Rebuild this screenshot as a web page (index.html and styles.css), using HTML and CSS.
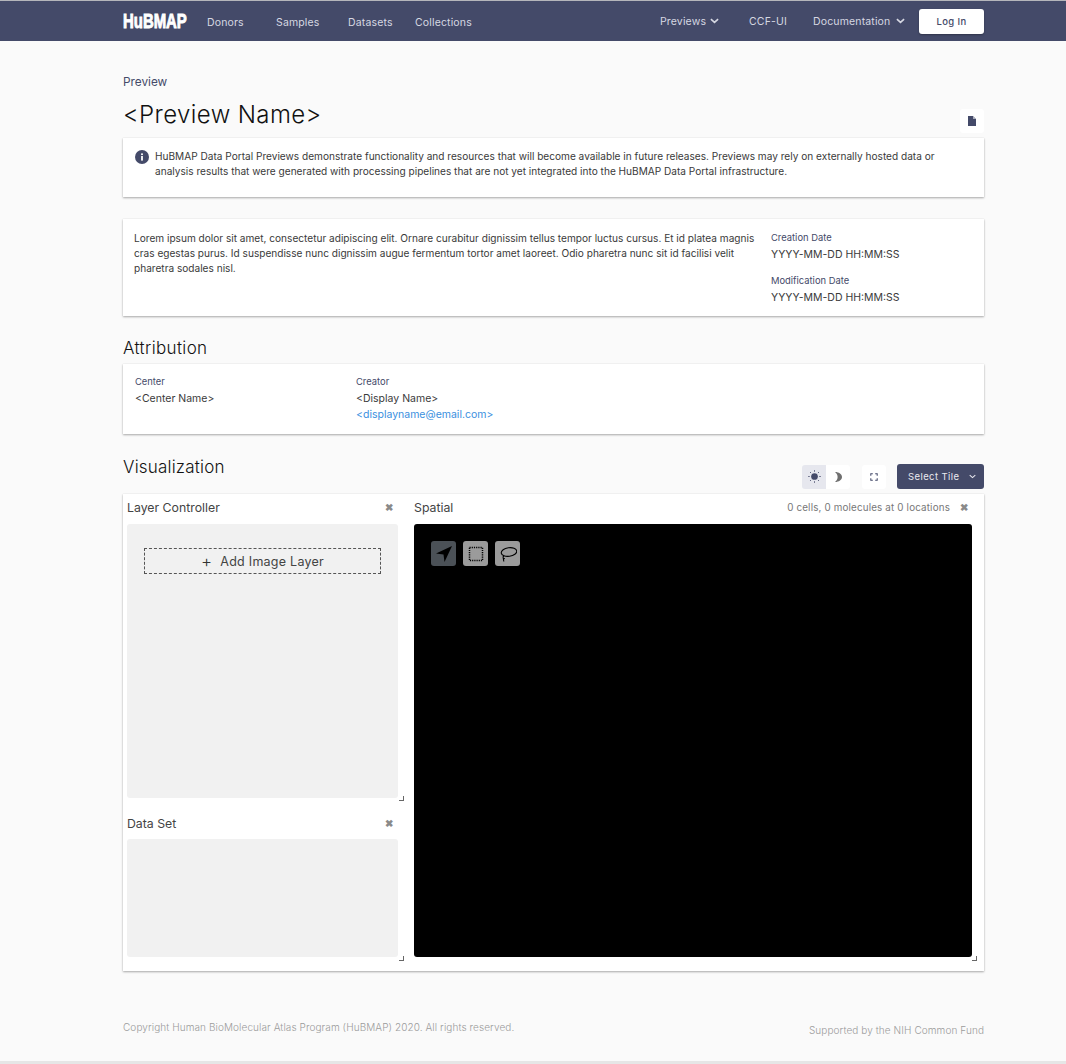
FILE: index.html
```html
<!DOCTYPE html>
<html lang="en">
<head>
<meta charset="utf-8">
<title>HuBMAP Preview</title>
<link rel="stylesheet" href="styles.css">
</head>
<body>
<header class="topbar">
  <nav class="nav-inner">
    <span class="logo-box"><span class="logo">HuBMAP</span></span>
    <a class="nav-link nav-donors">Donors</a>
    <a class="nav-link nav-samples">Samples</a>
    <a class="nav-link nav-datasets">Datasets</a>
    <a class="nav-link">Collections</a>
    <span class="nav-spacer"></span>
    <a class="nav-link nav-previews">Previews
      <svg class="chev" viewBox="0 0 10 6"><path d="M1 1l4 3.6L9 1" fill="none" stroke="currentColor" stroke-width="1.8"/></svg></a>
    <a class="nav-link nav-ccf">CCF-UI</a>
    <a class="nav-link nav-docs">Documentation
      <svg class="chev" viewBox="0 0 10 6"><path d="M1 1l4 3.6L9 1" fill="none" stroke="currentColor" stroke-width="1.8"/></svg></a>
    <button class="login">Log In</button>
  </nav>
</header>

<main class="page">
  <div class="eyebrow">Preview</div>
  <div class="title-row">
    <h1 class="title">&lt;Preview Name&gt;</h1>
    <span class="icon-tile">
      <svg class="doc-icon" viewBox="0 0 8 10"><path d="M0 0h5l3 3v7H0z" fill="#444a69"/><path d="M5 0v3h3z" fill="#fff" opacity=".55"/></svg>
    </span>
  </div>

  <section class="card notice">
    <svg class="info" viewBox="0 0 14 14"><circle cx="7" cy="7" r="7" fill="#444a69"/><rect x="6.1" y="6" width="1.8" height="4.6" fill="#fff"/><rect x="6.1" y="3.4" width="1.8" height="1.7" fill="#fff"/></svg>
    <p class="notice-text">HuBMAP Data Portal Previews demonstrate functionality and resources that will become available in future releases. Previews may rely on externally hosted data or analysis results that were generated with processing pipelines that are not yet integrated into the HuBMAP Data Portal infrastructure.</p>
  </section>

  <section class="card summary">
    <p class="summary-text">Lorem ipsum dolor sit amet, consectetur adipiscing elit. Ornare curabitur dignissim tellus tempor luctus cursus. Et id platea magnis cras egestas purus. Id suspendisse nunc dignissim augue fermentum tortor amet laoreet. Odio pharetra nunc sit id facilisi velit pharetra sodales nisl.</p>
    <div class="dates">
      <div class="label">Creation Date</div>
      <div class="value">YYYY-MM-DD HH:MM:SS</div>
      <div class="label label-gap">Modification Date</div>
      <div class="value">YYYY-MM-DD HH:MM:SS</div>
    </div>
  </section>

  <h2 class="section-title attr-title">Attribution</h2>
  <section class="card attribution">
    <div class="attr-center">
      <div class="label">Center</div>
      <div class="value">&lt;Center Name&gt;</div>
    </div>
    <div>
      <div class="label">Creator</div>
      <div class="value">&lt;Display Name&gt;</div>
      <a class="value mail">&lt;displayname@email.com&gt;</a>
    </div>
  </section>

  <div class="vis-head">
    <h2 class="section-title">Visualization</h2>
    <div class="vis-tools">
      <div class="toggle">
        <span class="tile tile-on">
          <svg class="sun" viewBox="0 0 14 14"><circle cx="7" cy="7" r="3.6" fill="#444a69"/><g stroke="#444a69" stroke-width="1"><path d="M7 .3v1.5M7 12.200v1.500M.3 7h1.500M12.200 7h1.500M2.300 2.300l1 1M10.700 10.700l1 1M2.300 11.700l1-1M10.700 3.300l1-1"/></g></svg>
        </span>
        <span class="tile">
          <svg class="moon" viewBox="0 0 8 10"><path d="M1 0C5 0 8 2.200 8 5s-3 5-7 5c2-1.500 2.600-3.200 2.600-5S3 1.500 1 0z" fill="#6f6f6f"/></svg>
        </span>
      </div>
      <span class="tile">
        <svg class="fs" viewBox="0 0 10 10"><path d="M1 3.500V1h2.500M6.500 1H9v2.500M9 6.500V9H6.500M3.500 9H1V6.500" fill="none" stroke="#444a69" stroke-width="1.300"/></svg>
      </span>
      <button class="select-tile">Select Tile
        <svg class="chev-small" viewBox="0 0 10 6"><path d="M1 1l4 3.600L9 1" fill="none" stroke="currentColor" stroke-width="1.500"/></svg>
      </button>
    </div>
  </div>

  <section class="card vis">
    <div class="vis-left">
      <div class="panel panel-layers">
        <div class="panel-head"><span>Layer Controller</span><span class="x">&#10006;</span></div>
        <div class="panel-body">
          <div class="add-layer"><span class="plus">+</span> Add Image Layer</div>
        </div>
        <span class="grip"></span>
      </div>
      <div class="panel panel-data">
        <div class="panel-head"><span>Data Set</span><span class="x">&#10006;</span></div>
        <div class="panel-body"></div>
        <span class="grip"></span>
      </div>
    </div>
    <div class="panel panel-spatial">
      <div class="panel-head spatial-head">
        <span>Spatial</span>
        <span class="spatial-meta"><span class="counts">0 cells, 0 molecules at 0 locations</span><span class="x">&#10006;</span></span>
      </div>
      <div class="viewport">
        <div class="view-tools">
          <span class="view-btn view-btn-on">
            <svg viewBox="0 0 18 18"><path d="M17 1L1 8.500l7.500 1 1 7.500z" fill="#000"/></svg>
          </span>
          <span class="view-btn">
            <svg viewBox="0 0 18 18"><rect x="2.500" y="2.500" width="13" height="13" fill="none" stroke="#000" stroke-width="1.500" stroke-dasharray="1.200 1"/></svg>
          </span>
          <span class="view-btn">
            <svg viewBox="0 0 18 18"><ellipse cx="10" cy="7" rx="7.800" ry="4.300" transform="rotate(-8 10 7)" fill="none" stroke="#000" stroke-width="1.100"/><path d="M5 11c-1.500 1-1 3 .800 2.500M4 11.500l.800 5" fill="none" stroke="#000" stroke-width="1.100"/></svg>
          </span>
        </div>
      </div>
      <span class="grip"></span>
    </div>
  </section>

  <footer class="foot">
    <span class="foot-left">Copyright Human BioMolecular Atlas Program (HuBMAP) 2020. All rights reserved.</span>
    <span class="foot-right">Supported by the NIH Common Fund</span>
  </footer>
</main>
<div class="bottom-strip"></div>
</body>
</html>
```

FILE: styles.css
```css
* { box-sizing: border-box; }
html, body { margin: 0; padding: 0; }
body {
  background: #fafafa;
  color: #1f1f1f;
  font-family: Inter, "Liberation Sans", sans-serif;
  font-size: 11px;
  height: 1064px;
  overflow: hidden;
  position: relative;
}
p, h1, h2 { margin: 0; font-weight: 400; }

.topbar {
  height: 41px;
  background: #444a69;
  border-top: 1px solid #b5b6bb;
}
.nav-inner {
  display: flex;
  align-items: center;
  height: 40px;
  margin: 0 82px 0 123px;
  color: #d6d8e2;
}
.logo-box {
  display: block;
  width: 65px;
  height: 20px;
  margin-right: 19px;
  flex: none;
}
.logo {
  display: inline-block;
  font-family: "Liberation Sans", sans-serif;
  font-weight: 700;
  font-size: 19.500px;
  color: #fff;
  -webkit-text-stroke: 0.9px #fff;
  line-height: 20px;
  transform: scaleX(.765);
  transform-origin: left center;
  white-space: nowrap;
}
.nav-link {
  font-size: 10.500px;
  letter-spacing: .15px;
  display: inline-flex;
  align-items: center;
  white-space: nowrap;
  position: relative;
  top: 1px;
}
.nav-donors { width: 69px; }
.nav-samples { width: 72px; }
.nav-datasets { width: 67px; }
.nav-spacer { flex: 1; }
.nav-previews { width: 89px; top: 0; }
.nav-ccf { width: 64px; top: 0; }
.nav-docs { width: 106px; top: 0; }
.chev { width: 9px; height: 6px; margin-left: 4px; }
.nav-docs .chev { margin-left: 6px; }
.login {
  width: 65px;
  height: 25px;
  border: 0;
  border-radius: 3px;
  background: #fff;
  color: #444a69;
  font: 500 9.500px Inter, sans-serif;
  letter-spacing: .4px;
  box-shadow: 0 1px 2px rgba(0,0,0,.3);
}

.page { padding: 0 82px 0 123px; }
.eyebrow {
  margin-top: 34px;
  font-size: 11.800px;
  line-height: 14px;
  color: #444a69;
}
.title-row {
  display: flex;
  justify-content: space-between;
  align-items: flex-end;
  height: 44px;
}
.title {
  font-size: 24px;
  font-weight: 300;
  letter-spacing: .4px;
  line-height: 29px;
  margin: 5px 0 4px 0;
  color: #111;
}
.icon-tile, .tile {
  display: inline-flex;
  align-items: center;
  justify-content: center;
  width: 24px;
  height: 24px;
  background: #fff;
  border-radius: 3px;
}
.doc-icon { width: 8px; height: 10px; }

.card {
  background: #fff;
  box-shadow: 0 1px 2px rgba(0,0,0,.32), 0 0 1px rgba(0,0,0,.1);
}
.notice {
  margin-top: 5px;
  height: 59px;
  padding: 12px 12px 0 12px;
  display: flex;
  gap: 6px;
}
.info { width: 14px; height: 14px; flex: none; }
.notice-text {
  font-size: 10.100px;
  line-height: 15px;
  color: #3a3a3a;
  margin-top: -1px;
  flex: 1;
}
.summary {
  margin-top: 22px;
  height: 97px;
  display: flex;
  padding: 12px 11px 0;
}
.summary-text {
  width: 637px;
  flex: none;
  padding-right: 16px;
  font-size: 10.100px;
  line-height: 15px;
  color: #3a3a3a;
}
.dates .label { margin-top: 1px; }
.label {
  font-size: 9.400px;
  line-height: 12px;
  color: #444a69;
}
.dates .label-gap { margin-top: 12px; }
.value {
  display: block;
  font-size: 10.500px;
  line-height: 16px;
  margin-top: 3px;
  color: #3a3a3a;
}
.section-title {
  font-size: 17px;
  font-weight: 300;
  letter-spacing: .2px;
  line-height: 22px;
  color: #111;
}
.attr-title { margin-top: 21px; letter-spacing: .35px; }
.attribution {
  margin-top: 5px;
  height: 70px;
  padding: 12px 12px 0;
  display: flex;
}
.attr-center { width: 221px; }
.mail { color: #3a8fe0; margin-top: 0; }

.vis-head {
  margin-top: 22px;
  display: flex;
  justify-content: space-between;
  align-items: flex-start;
  height: 38px;
}
.vis-tools {
  display: flex;
  align-items: center;
  gap: 12px;
  margin-top: 8px;
}
.toggle { display: flex; }
.tile-on { background: #e6e7ee; border-radius: 3px 0 0 3px; }
.toggle .tile:last-child { border-radius: 0 3px 3px 0; }
.sun { width: 13px; height: 13px; }
.moon { width: 8px; height: 10px; }
.fs { width: 8px; height: 8px; }
.select-tile {
  width: 87px;
  height: 25px;
  margin-left: -1px;
  padding: 0 0 0 11px;
  border: 0;
  border-radius: 3px;
  background: #444a69;
  color: #e9e9ef;
  font: 400 9.500px Inter, sans-serif;
  letter-spacing: .4px;
  display: flex;
  align-items: center;
  gap: 10px;
}
.chev-small { width: 7px; height: 5px; }

.vis {
  height: 477px;
  display: flex;
}
.vis-left {
  width: 282px;
  display: flex;
  flex-direction: column;
  margin-left: 4px;
}
.panel { position: relative; }
.panel-layers { height: 315px; }
.panel-data { height: 157px; }
.panel-head {
  display: flex;
  justify-content: space-between;
  align-items: center;
  height: 30px;
  padding-bottom: 4px;
  font-size: 12.300px;
  color: #444;
  padding-right: 15px;
}
.panel-data .panel-head { padding-bottom: 2px; }
.x { font-size: 9.500px; font-weight: 600; color: #8a8a8a; width: 9px; }
.panel-body {
  background: #f1f1f1;
  border-radius: 3px;
  width: 271px;
  height: 274px;
  padding: 24px 17px 0;
}
.panel-data .panel-body { height: 118px; padding: 0; }
.add-layer {
  height: 26px;
  border: 1px dashed #555;
  font-size: 12.500px;
  color: #444;
  display: flex;
  align-items: center;
  justify-content: center;
  gap: 8px;
  letter-spacing: .25px;
}
.plus { font-size: 17px; font-weight: 300; color: #333; line-height: 1; }
.grip {
  position: absolute;
  width: 5px;
  height: 5px;
  border-right: 1.500px solid #666;
  border-bottom: 1.500px solid #666;
  left: 272px;
  bottom: 8px;
}
.panel-data .grip { bottom: 5px; }
.panel-spatial {
  width: 558px;
  margin-left: 5px;
}
.panel-spatial .grip { left: 558px; bottom: 10px; }
.spatial-head { padding-right: 0; width: 555px; }
.spatial-meta { display: flex; align-items: center; gap: 10px; }
.counts { font-size: 9.800px; color: #777; letter-spacing: .17px; }
.viewport {
  height: 433px;
  width: 558px;
  background: #000;
  border-radius: 3px;
  padding: 17px;
}
.view-tools { display: flex; gap: 7px; }
.view-btn {
  width: 25px;
  height: 25px;
  border-radius: 3px;
  background: #9b9b9b;
  display: inline-flex;
  align-items: center;
  justify-content: center;
}
.view-btn svg { width: 18px; height: 18px; }
.view-btn-on { background: #4b5157; }

.foot {
  display: flex;
  justify-content: space-between;
  align-items: flex-start;
  margin-top: 50px;
  font-size: 10px;
  font-weight: 300;
  color: #9a9a9a;
  letter-spacing: .09px;
}
.foot-right { margin-top: 3px; }
.bottom-strip {
  position: absolute;
  left: 0;
  right: 0;
  bottom: 0;
  height: 3px;
  background: #e6e6e6;
}
```
